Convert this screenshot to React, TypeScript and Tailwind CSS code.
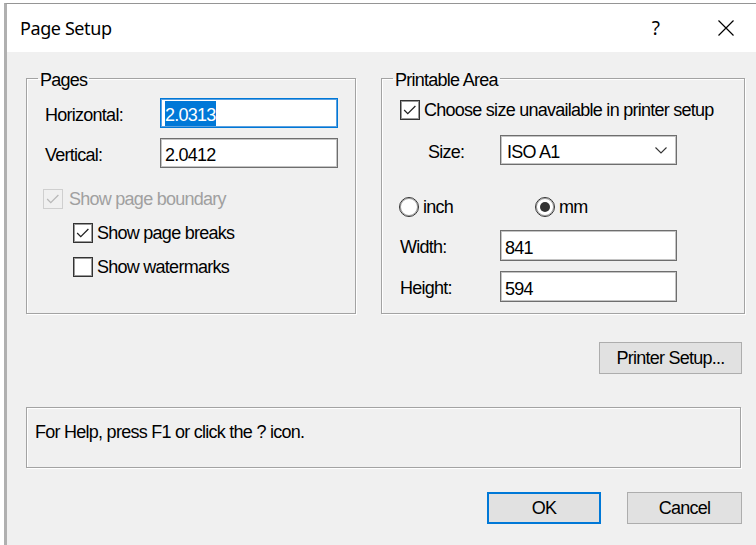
import React from 'react';

const Check: React.FC<{ className?: string }> = ({ className }) => (
  <svg viewBox="0 0 20 20" className={className} fill="none">
    <polyline points="3.5,10 7.5,14 16,5.5" stroke="currentColor" strokeWidth="1.4" />
  </svg>
);

interface CheckBoxProps {
  label: string;
  checked?: boolean;
  disabled?: boolean;
  className?: string;
}

const CheckBox: React.FC<CheckBoxProps> = ({ label, checked, disabled, className = '' }) => (
  <div className={`flex items-center h-[20px] ${className}`}>
    <div
      className={`w-[20px] h-[20px] shrink-0 ${
        disabled
          ? 'border border-[#cfcfcf] text-[#b8b8b8]'
          : 'border border-[#333333] shadow-[inset_0_0_0_1px_#9a9a9a] bg-white text-[#222222]'
      }`}
    >
      {checked && <Check className="w-full h-full" />}
    </div>
    <span className={`leading-[20px] ${disabled ? 'ml-[6px] text-[#a0a0a0]' : 'ml-[4px]'}`}>{label}</span>
  </div>
);

const Radio: React.FC<{ label: string; selected?: boolean; className?: string }> = ({
  label,
  selected,
  className = '',
}) => (
  <div className={`flex items-center h-[20px] ${className}`}>
    <div className="w-[20px] h-[20px] rounded-full border border-[#333333] shadow-[inset_0_0_0_1px_#a0a0a0] bg-white flex items-center justify-center shrink-0">
      {selected && <div className="w-[10px] h-[10px] rounded-full bg-[#333333]" />}
    </div>
    <span className="ml-[4px] leading-[20px]">{label}</span>
  </div>
);

const TextBox: React.FC<{ value: string; width: string; height: string; focused?: boolean }> = ({
  value,
  width,
  height,
  focused,
}) => (
  <div
    className={`${width} ${height} bg-white flex items-center pt-[4px] pl-[4px] border ${
      focused ? 'border-[#0078d7] shadow-[inset_0_0_0_1px_#5aa0e0]' : 'border-[#6e6e6e] shadow-[inset_0_0_0_1px_#c4c4c4]'
    }`}
  >
    {focused ? (
      <span className="leading-[20px]">
        <span className="bg-[#0078d7] text-white pt-[4px] pb-[1px]">{value}</span>
      </span>
    ) : (
      <span className="leading-[20px]">{value}</span>
    )}
  </div>
);

const GroupBox: React.FC<{ title: string; width: string; children: React.ReactNode }> = ({
  title,
  width,
  children,
}) => (
  <fieldset className={`${width} h-[247px] border border-[#a3a3a3] shadow-[1px_1px_0_#ffffff,inset_1px_1px_0_#ffffff] p-0 m-0 min-w-0`}>
    <legend className="ml-[11px] px-[2px] pt-[4px] leading-[18px]">{title}</legend>
    {children}
  </fieldset>
);

export default function App() {
  return (
    <div className="w-[756px] h-[545px] bg-white overflow-hidden text-[18px] tracking-[-0.74px] text-black font-['Liberation_Sans',Arial,sans-serif]">
      <div className="h-[3px]" />
      <div className="ml-[4px] h-[542px] border-t border-t-[#959595] border-l-[3px] border-l-[#b0b0b0] flex flex-col">
        {/* title bar */}
        <div className="h-[48px] bg-white flex items-center pl-[13px] pr-[22px] shrink-0 tracking-normal">
          <span className="font-['Noto_Sans',sans-serif] text-[18px] tracking-[-0.4px] leading-[26px]">Page Setup</span>
          <span className="ml-auto font-['Noto_Sans',sans-serif] text-[19px] leading-[26px]">?</span>
          <svg viewBox="0 0 16 16" className="ml-[58px] w-[16px] h-[16px]" fill="none">
            <path d="M0.5 0.5 L15.5 15.5 M15.5 0.5 L0.5 15.5" stroke="#000" strokeWidth="1.2" />
          </svg>
        </div>

        {/* body */}
        <div className="flex-1 bg-[#f0f0f0] pl-[19px]">
          <div className="flex gap-[25px] mt-[15px]">
            <GroupBox title="Pages" width="w-[330px]">
              <div className="pt-[9px] pl-[18px]">
                <div className="flex items-center h-[30px]">
                  <span className="w-[115px] pt-[4px] leading-[20px]">Horizontal:</span>
                  <TextBox value="2.0313" width="w-[178px]" height="h-[30px]" focused />
                </div>
                <div className="flex items-center h-[30px] mt-[10px]">
                  <span className="w-[115px] pt-[4px] leading-[20px]">Vertical:</span>
                  <TextBox value="2.0412" width="w-[178px]" height="h-[30px]" />
                </div>
                <CheckBox label="Show page boundary" checked disabled className="mt-[21px] -ml-[2px]" />
                <CheckBox label="Show page breaks" checked className="mt-[14px] ml-[28px]" />
                <CheckBox label="Show watermarks" className="mt-[14px] ml-[28px]" />
              </div>
            </GroupBox>

            <GroupBox title="Printable Area" width="w-[364px]">
              <div className="pt-[11px] pl-[18px]">
                <CheckBox label="Choose size unavailable in printer setup" checked />
                <div className="flex items-center h-[30px] mt-[15px] ml-[28px]">
                  <span className="w-[72px] pt-[3px] leading-[20px]">Size:</span>
                  <div className="w-[177px] h-[30px] bg-white border border-[#6e6e6e] shadow-[inset_0_0_0_1px_#c4c4c4] flex items-center pt-[3px] pl-[6px] pr-[9px]">
                    <span className="leading-[20px]">ISO A1</span>
                    <svg viewBox="0 0 12 7" className="ml-auto w-[12px] h-[7px] -mt-[3px]" fill="none">
                      <polyline points="0.5,0.5 6,6 11.5,0.5" stroke="#333" strokeWidth="1.1" />
                    </svg>
                  </div>
                </div>
                <div className="flex items-center mt-[32px] -ml-[1px]">
                  <Radio label="inch" className="w-[136px]" />
                  <Radio label="mm" selected />
                </div>
                <div className="flex items-center h-[31px] mt-[13px]">
                  <span className="w-[100px] pt-[3px] leading-[20px]">Width:</span>
                  <TextBox value="841" width="w-[177px]" height="h-[31px]" />
                </div>
                <div className="flex items-center h-[31px] mt-[10px]">
                  <span className="w-[100px] pt-[3px] leading-[20px]">Height:</span>
                  <TextBox value="594" width="w-[177px]" height="h-[31px]" />
                </div>
              </div>
            </GroupBox>
          </div>

          <div className="flex justify-end pr-[14px] mt-[28px]">
            <button className="w-[143px] h-[32px] bg-[#e1e1e1] border border-[#adadad] leading-[20px]">
              Printer Setup...
            </button>
          </div>

          <div className="w-[715px] h-[61px] mt-[33px] border border-[#a3a3a3] shadow-[1px_1px_0_#ffffff,inset_1px_1px_0_#ffffff] pl-[8px] pt-[11px]">
            <span className="leading-[20px]">For Help, press F1 or click the ? icon.</span>
          </div>

          <div className="flex justify-end gap-[26px] pr-[14px] mt-[24px]">
            <button className="w-[114px] h-[32px] bg-[#e1e1e1] border-2 border-[#0078d7] leading-[20px]">OK</button>
            <button className="w-[115px] h-[32px] bg-[#e1e1e1] border border-[#adadad] leading-[20px]">Cancel</button>
          </div>
        </div>
      </div>
    </div>
  );
}
